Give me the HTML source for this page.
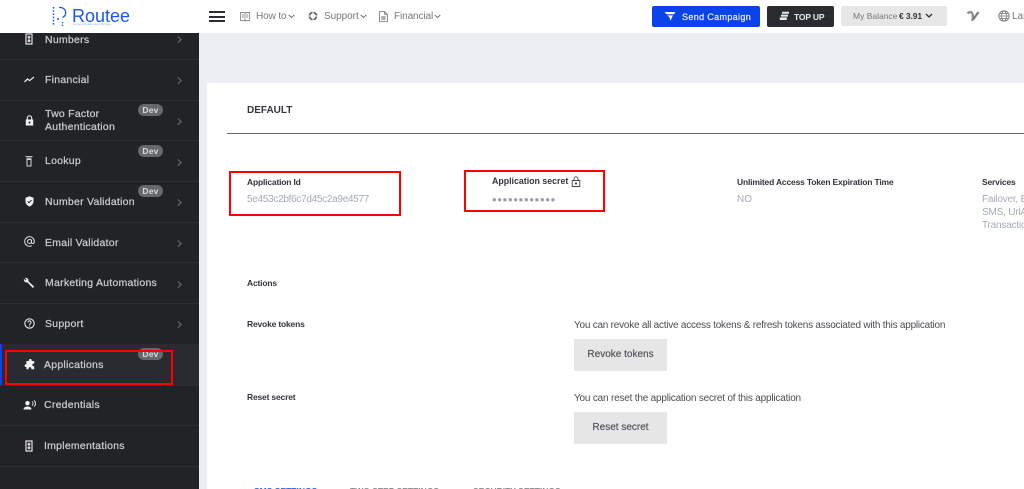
<!DOCTYPE html>
<html><head><meta charset="utf-8"><style>
html,body{margin:0;padding:0;background:#eceef3}
#p{position:relative;width:1024px;height:489px;overflow:hidden;background:#eceef3;font-family:"Liberation Sans",sans-serif;filter:blur(.25px)}
.a,.t,.s,.l,.v,.b,.d,.c,.i,svg{position:absolute}
.t{white-space:nowrap;line-height:14px}
.s{left:45px;white-space:nowrap;color:#c9cacd;font-size:10.5px;letter-spacing:.25px;-webkit-text-stroke:.25px #c9cacd;line-height:14px}
.l{left:247px;white-space:nowrap;color:#33353c;font-size:8.5px;font-weight:bold;letter-spacing:-.18px;line-height:12px}
.v{white-space:nowrap;color:#a5abb9;font-size:10px;line-height:13px}
.b{background:#e6e6e6;color:#55575c;font-size:10px;-webkit-text-stroke:.2px #55575c;text-align:center;height:32px;line-height:31px;width:93px;left:574px}
.d{left:138px;width:25px;height:12px;border-radius:6px;background:#66686b;color:#d8d8d8;font-size:8.5px;font-weight:bold;text-align:center;line-height:12px;letter-spacing:.2px}
.c{left:175.5px;width:3.5px;height:3.5px;border-top:1.1px solid #6f7276;border-right:1.1px solid #6f7276;transform:rotate(45deg)}
.i{left:0;width:199px;height:1px;background:#2d2e33}
.r{position:absolute;border:2px solid #f00;box-sizing:border-box}
.n{font-size:10px;color:#75777c;top:10px}
.x{font-size:10px;color:#4b4d52;letter-spacing:-.235px}
</style></head><body><div id="p">
<div class="a" style="left:0;top:0;width:1024px;height:33px;background:#fff"></div>
<div class="a" style="left:0;top:33px;width:199px;height:456px;background:#222327"></div>
<div class="a" style="left:207px;top:83px;width:817px;height:406px;background:#fff"></div>

<!-- logo -->
<svg style="left:52px;top:6px" width="16" height="21" viewBox="0 0 16 21"><path d="M7 1.500h1.500a5.200 5.200 0 0 1 2 10" fill="none" stroke="#1a56ee" stroke-width="1.300"/><path d="M1.500 1v19" stroke="#1a56ee" stroke-width="1.500" stroke-dasharray="1.600 1.600" fill="none"/><path d="M10.500 16v4" stroke="#1a56ee" stroke-width="1.400" stroke-dasharray="1.400 1.400" fill="none"/><circle cx="6" cy="13" r="1" fill="#1a56ee"/></svg>
<div class="t" style="left:72px;top:5px;font-size:18px;line-height:22px;color:#1a56ee">Routee</div>
<div class="t" style="left:73px;top:22px;font-size:3px;line-height:4px;color:#8fa8ee">Communication as a Service</div>

<!-- hamburger -->
<div class="a" style="left:209px;top:11px;width:16px;height:2px;background:#2a2c30"></div>
<div class="a" style="left:209px;top:15.500px;width:16px;height:2px;background:#2a2c30"></div>
<div class="a" style="left:209px;top:20px;width:16px;height:2px;background:#2a2c30"></div>

<!-- nav -->
<svg style="left:240px;top:11px" width="10" height="11" viewBox="0 0 10 11" fill="none" stroke="#8b8d92" stroke-width=".9"><path d="M.5 1.500h3.700l.8.6.8-.6h3.700v8H5.800l-.8.6-.8-.6H.5zM5 2v8M1.800 4h2M1.800 6h2M6.200 4h2M6.200 6h2"/></svg>
<div class="t n" style="left:256px;letter-spacing:-.1px">How to</div>
<svg style="left:288px;top:14px" width="7" height="5" viewBox="0 0 7 5" fill="none" stroke="#6b6d72" stroke-width="1"><path d="M.7 1l2.800 2.600L6.300 1"/></svg>
<svg style="left:308px;top:11px" width="10" height="10" viewBox="0 0 10 10" fill="none"><circle cx="5" cy="5" r="3.600" stroke="#55575c" stroke-width="1.600"/><path d="M5 .5v2M5 7.500v2M.5 5h2M7.500 5h2" stroke="#fff" stroke-width="1"/></svg>
<div class="t n" style="left:324px;letter-spacing:-.05px">Support</div>
<svg style="left:360px;top:14px" width="7" height="5" viewBox="0 0 7 5" fill="none" stroke="#6b6d72" stroke-width="1"><path d="M.7 1l2.800 2.600L6.300 1"/></svg>
<svg style="left:379px;top:11px" width="9" height="11" viewBox="0 0 9 11" fill="none" stroke="#7b7d82" stroke-width=".9"><path d="M.6.6h5l2.800 2.800v7H.6zM5.600.6v2.800h2.800"/><path d="M2.300 6h4.300M2.300 8h4.300" stroke-width="1.200"/></svg>
<div class="t n" style="left:394px;letter-spacing:-.1px">Financial</div>
<svg style="left:434px;top:14px" width="7" height="5" viewBox="0 0 7 5" fill="none" stroke="#6b6d72" stroke-width="1"><path d="M.7 1l2.800 2.600L6.300 1"/></svg>

<!-- top right -->
<div class="a" style="left:652px;top:6px;width:108px;height:21px;background:#0a43e8;border-radius:2px"></div>
<svg style="left:664px;top:11px" width="12" height="11" viewBox="0 0 12 11" fill="#fff"><path d="M.5 1h11L9.800 3.300H2.600zM3.500 4.400h5.400L6.500 9.800 5.600 6.600z"/></svg>
<div class="t" style="left:682px;top:10px;font-size:9px;-webkit-text-stroke:.25px #e6ebfd;letter-spacing:.35px;color:#e6ebfd">Send Campaign</div>
<div class="a" style="left:767px;top:6px;width:67px;height:21px;background:#2a2c30;border-radius:2px"></div>
<svg style="left:779px;top:11px" width="11" height="10" viewBox="0 0 11 10" fill="#e8e8e8"><path d="M3 .8h7v2H3zM2 3.600h7v2H2zM.8 6.400h7v2.600H.8z"/></svg>
<div class="t" style="left:794px;top:10px;font-size:8.500px;font-weight:bold;color:#e8e8e8;letter-spacing:-.15px">TOP UP</div>
<div class="a" style="left:841px;top:6px;width:106px;height:20px;background:#e7e7e7;border-radius:2px"></div>
<div class="t" style="left:853px;top:9px;font-size:8.500px;color:#77797e">My Balance</div>
<div class="t" style="left:899px;top:9px;font-size:8.500px;font-weight:bold;color:#33353a;letter-spacing:-.1px">€ 3.91</div>
<svg style="left:925px;top:13px" width="8" height="6" viewBox="0 0 8 6" fill="none" stroke="#2a2c30" stroke-width="1.300"><path d="M1 1l3 3 3-3"/></svg>
<svg style="left:966px;top:10px" width="14" height="13" viewBox="0 0 14 13" fill="none"><path d="M1.500 3.500c2-2 4-2 5 .5 1 2 0 4 0 7" stroke="#8e9096" stroke-width="2.400"/><path d="M12.500 2L7.500 9" stroke="#777a80" stroke-width="2.200"/></svg>
<svg style="left:998px;top:10px" width="12" height="12" viewBox="0 0 12 12" fill="none" stroke="#74767b" stroke-width=".8"><circle cx="6" cy="6" r="5.200"/><ellipse cx="6" cy="6" rx="2.400" ry="5.200"/><path d="M.8 6h10.400M1.500 3.400h9M1.500 8.600h9"/></svg>
<div class="t n" style="left:1012px">Language</div>

<!-- sidebar dividers -->
<div class="i" style="top:59px"></div><div class="i" style="top:100px"></div><div class="i" style="top:140px"></div><div class="i" style="top:181px"></div><div class="i" style="top:222px"></div><div class="i" style="top:262px"></div><div class="i" style="top:303px"></div><div class="i" style="top:425px"></div><div class="i" style="top:466px"></div>
<div class="a" style="left:0;top:344px;width:199px;height:41px;background:#2a2b31"></div>
<div class="a" style="left:0;top:344px;width:2px;height:41px;background:#0a43e8"></div>
<div class="i" style="top:385px"></div>

<div class="s" style="top:33px">Numbers</div>
<div class="s" style="top:73px">Financial</div>
<div class="s" style="top:107px">Two Factor</div>
<div class="s" style="top:120px">Authentication</div>
<div class="s" style="top:154px">Lookup</div>
<div class="s" style="top:195px">Number Validation</div>
<div class="s" style="top:236px">Email Validator</div>
<div class="s" style="top:276px">Marketing Automations</div>
<div class="s" style="top:317px">Support</div>
<div class="s" style="top:358px;left:44px">Applications</div>
<div class="s" style="top:398px;left:44px">Credentials</div>
<div class="s" style="top:439px;left:44px">Implementations</div>

<div class="c" style="top:37px"></div><div class="c" style="top:78px"></div><div class="c" style="top:119px"></div><div class="c" style="top:160px"></div><div class="c" style="top:200px"></div><div class="c" style="top:241px"></div><div class="c" style="top:282px"></div><div class="c" style="top:322px"></div>

<div class="d" style="top:104px">Dev</div>
<div class="d" style="top:145px">Dev</div>
<div class="d" style="top:185px">Dev</div>
<div class="d" style="top:348px">Dev</div>

<!-- sidebar icons -->
<svg style="left:25px;top:33px" width="8" height="12" viewBox="0 0 8 12" fill="none" stroke="#e2e2e2" stroke-width="1.200"><path d="M1 1h6v10H1zM4 3.500v5M2.600 4.500L4 3.300l1.400 1.200M2.600 7.500L4 8.700l1.400-1.200"/></svg>
<svg style="left:24px;top:76px" width="11" height="7" viewBox="0 0 11 7" fill="none" stroke="#e2e2e2" stroke-width="1.300"><path d="M.5 6l3-3 2 1.600L10 1"/></svg>
<svg style="left:25px;top:115px" width="9" height="11" viewBox="0 0 9 11"><path d="M2.300 4.500V3a2.200 2.200 0 0 1 4.400 0v1.500" fill="none" stroke="#f0f0f0" stroke-width="1.100"/><path d="M.8 4.500h7.400v6H.8z" fill="#f0f0f0"/><circle cx="4.500" cy="7.500" r="1" fill="#222327"/></svg>
<svg style="left:25px;top:155px" width="8" height="12" viewBox="0 0 8 12" fill="none" stroke="#d8d8d8" stroke-width="1"><path d="M.5 1.600h7M1.500 3.200h5M2 4.500h4v6.500H2z"/></svg>
<svg style="left:25px;top:196px" width="9" height="11" viewBox="0 0 9 11"><path d="M4.500.3l4 1.500v3.500c0 2.600-1.800 4.400-4 5.300-2.200-.9-4-2.700-4-5.300V1.800z" fill="#f0f0f0"/><path d="M2.600 5.300l1.400 1.400 2.500-2.600" fill="none" stroke="#222327" stroke-width="1"/></svg>
<svg style="left:24px;top:236px" width="11" height="11" viewBox="0 0 11 11" fill="none" stroke="#dedede" stroke-width="1"><circle cx="5.500" cy="5.500" r="2"/><path d="M7.500 3.500v3c0 1.500 2.800 1.500 2.800-1A4.800 4.800 0 1 0 7.800 9.700"/></svg>
<svg style="left:23px;top:277px" width="12" height="12" viewBox="0 0 12 12"><path d="M1 1.800a2.800 2.800 0 0 0 3.500 3.600l5.300 5.600 1.400-1.400L5.400 4.300A2.800 2.800 0 0 0 1.800.9l1.700 1.700-.9.9z" fill="#f0f0f0"/></svg>
<svg style="left:24px;top:318px" width="11" height="11" viewBox="0 0 11 11" fill="none" stroke="#e2e2e2" stroke-width="1.100"><circle cx="5.500" cy="5.500" r="4.700"/><path d="M4 4.300a1.500 1.500 0 1 1 2.200 1.400c-.5.3-.7.5-.7 1"/><path d="M5.500 7.600v1"/></svg>
<svg style="left:24px;top:359px" width="11" height="11" viewBox="0 0 11 11"><path d="M3.600 2h1.500a1.400 1.400 0 1 1 2.400 0h2.700v2.600a1.400 1.400 0 1 0 0 2.600v3H7.200a1.400 1.400 0 1 0-2.500 0H2.400V8a1.400 1.400 0 1 1 0-2.700V2z" fill="#f2f2f2"/></svg>
<svg style="left:23px;top:400px" width="13" height="10" viewBox="0 0 13 10"><circle cx="4.500" cy="3.200" r="2.200" fill="#efefef"/><path d="M.5 9.500c0-4 8-4 8 0z" fill="#efefef"/><path d="M9 1.500c1.500 1 1.500 3 0 4M11 .5c2 1.500 2 4.500 0 6" fill="none" stroke="#efefef" stroke-width=".9"/></svg>
<svg style="left:25px;top:440px" width="8" height="12" viewBox="0 0 8 12" fill="none" stroke="#e2e2e2" stroke-width="1.200"><path d="M1 1h6v10H1zM4 3.500v5M2.600 4.500L4 3.300l1.400 1.200M2.600 7.500L4 8.700l1.400-1.200"/></svg>

<!-- main content -->
<div class="t" style="left:247px;top:104px;font-size:10px;font-weight:bold;color:#34363c">DEFAULT</div>
<div class="a" style="left:227px;top:133px;width:797px;height:1px;background:#66686c"></div>

<div class="l" style="top:176px">Application Id</div>
<div class="v" style="left:247px;top:193px;letter-spacing:-.29px">5e453c2bf6c7d45c2a9e4577</div>
<div class="l" style="left:492px;top:175px;font-size:8.800px;letter-spacing:0">Application secret</div>
<svg style="left:571px;top:176px" width="10" height="11" viewBox="0 0 10 11" fill="none" stroke="#44464b" stroke-width=".9"><path d="M1.200 4.500h7.600v6H1.200zM3 4.500V2.800a2 2 0 0 1 4 0v1.700"/><circle cx="5" cy="7.500" r=".7" fill="#44464b"/></svg>
<div class="v" style="left:492px;top:193px;font-size:13px;letter-spacing:.78px;color:#9ba1b1">••••••••••••</div>
<div class="l" style="left:737px;top:176px">Unlimited Access Token Expiration Time</div>
<div class="v" style="left:737px;top:193px">NO</div>
<div class="l" style="left:982px;top:176px">Services</div>
<div class="v" style="left:982px;top:193px;letter-spacing:-.2px">Failover, Email,</div>
<div class="v" style="left:982px;top:206px;letter-spacing:-.2px">SMS, UrlAnalytics,</div>
<div class="v" style="left:982px;top:219px;letter-spacing:-.2px">Transactions</div>

<div class="l" style="top:277px">Actions</div>
<div class="l" style="top:318px">Revoke tokens</div>
<div class="t x" style="left:574px;top:319px">You can revoke all active access tokens &amp; refresh tokens associated with this application</div>
<div class="b" style="top:339px">Revoke tokens</div>
<div class="l" style="top:391px">Reset secret</div>
<div class="t x" style="left:574px;top:392px;letter-spacing:-.2px">You can reset the application secret of this application</div>
<div class="b" style="top:412px">Reset secret</div>

<div class="t" style="left:254px;top:484px;font-size:8.500px;font-weight:bold;color:#2f63ee">SMS SETTINGS</div>
<div class="t" style="left:350px;top:484px;font-size:8.500px;font-weight:bold;color:#8a8c90">TWO STEP SETTINGS</div>
<div class="t" style="left:473px;top:484px;font-size:8.500px;font-weight:bold;color:#8a8c90">SECURITY SETTINGS</div>

<!-- red annotations -->
<div class="r" style="left:229px;top:171px;width:172px;height:45px"></div>
<div class="r" style="left:464px;top:170px;width:141px;height:42px"></div>
<div class="r" style="left:5px;top:350px;width:168px;height:35px"></div>
</div></body></html>
